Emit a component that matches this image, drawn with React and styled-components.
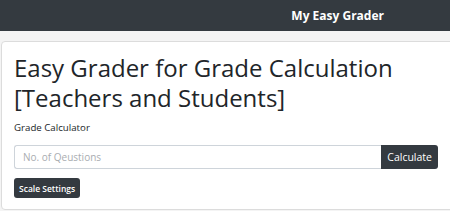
import React from "react";
import styled, { createGlobalStyle } from "styled-components";

const GlobalStyle = createGlobalStyle`
  body {
    margin: 0;
    background: #f4f4f4;
    font-family: "Open Sans", "Noto Sans", sans-serif;
    color: #212529;
    overflow: hidden;
  }
  * {
    box-sizing: border-box;
  }
`;

const Navbar = styled.nav`
  height: 31px;
  background: #343a40;
  display: flex;
  align-items: center;
  justify-content: flex-end;
  padding-right: 66px;
`;

const Brand = styled.span`
  color: #fff;
  font-weight: 700;
  font-size: 12px;
`;

const Main = styled.main`
  padding: 10px 0 0 1px;
`;

const Card = styled.section`
  background: #fff;
  border: 1px solid #dcdcdc;
  border-radius: 4px;
  margin-right: -4px;
  padding: 11px 15px 11px 12px;
`;

const Title = styled.h1`
  margin: 0;
  font-size: 24px;
  font-weight: 400;
  line-height: 30px;
`;

const Label = styled.p`
  margin: 8px 0 11px;
  font-size: 9.7px;
`;

const InputGroup = styled.div`
  display: flex;
  height: 24px;
`;

const Input = styled.input`
  flex: 1;
  min-width: 0;
  height: 100%;
  border: 1px solid #ced4da;
  border-right: none;
  border-radius: 3px 0 0 3px;
  padding: 0 8px;
  font-family: inherit;
  font-size: 10px;
  color: #495057;
  outline: none;

  &::placeholder {
    color: #a9adb1;
  }
`;

const Button = styled.button`
  background: #343a40;
  color: #fff;
  border: none;
  font-family: inherit;
  font-size: ${(p) => (p.$small ? "8.5px" : "10.5px")};
  font-weight: ${(p) => (p.$small ? 600 : 400)};
  height: ${(p) => (p.$small ? "20px" : "100%")};
  padding: 0 ${(p) => (p.$small ? "5px" : "6px")};
  border-radius: ${(p) => (p.$attached ? "0 3px 3px 0" : "3px")};
  cursor: pointer;
`;

const Footer = styled.div`
  margin-top: 9px;
  display: flex;
`;

export default function App() {
  return (
    <>
      <GlobalStyle />
      <Navbar>
        <Brand>My Easy Grader</Brand>
      </Navbar>
      <Main>
        <Card>
          <Title>
            Easy Grader for Grade Calculation
            <br />
            [Teachers and Students]
          </Title>
          <Label>Grade Calculator</Label>
          <InputGroup>
            <Input placeholder="No. of Qeustions" />
            <Button $attached>Calculate</Button>
          </InputGroup>
          <Footer>
            <Button $small>Scale Settings</Button>
          </Footer>
        </Card>
      </Main>
    </>
  );
}
